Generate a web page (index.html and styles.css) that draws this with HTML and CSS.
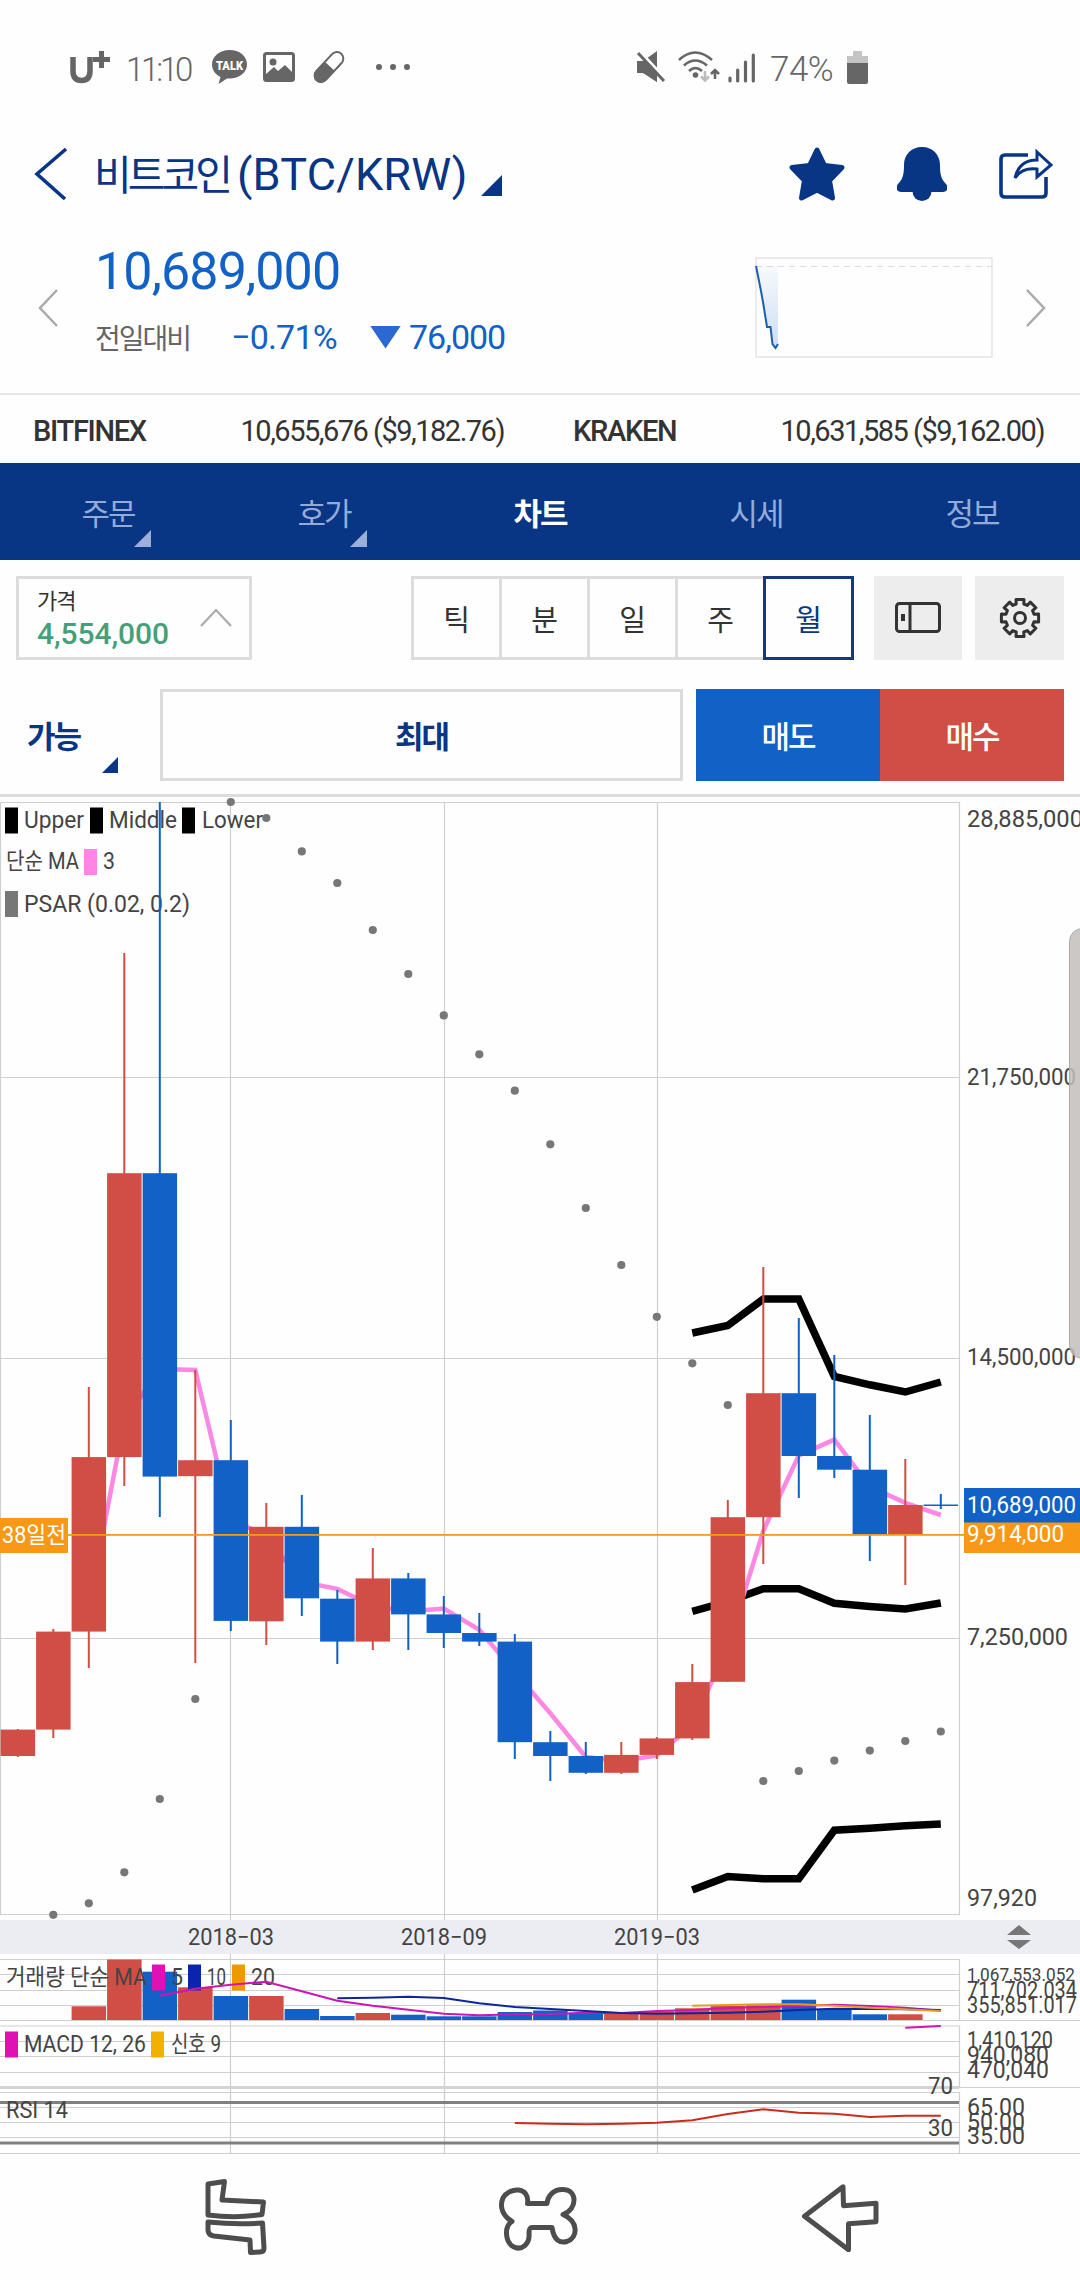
FILE: index.html
```html
<!DOCTYPE html>
<html lang="ko">
<head>
    <meta charset="UTF-8">
    <meta name="viewport" content="width=device-width, initial-scale=1.0">
    <title>비트코인(BTC/KRW)</title>
    <link rel="stylesheet" href="styles.css">
</head>
<body>

    <div class="status">
        <svg class="carrier" width="42" height="36" viewBox="0 0 42 36" fill="none" stroke="#666">
            <path d="M3 8v14q0 9.500 8.500 9.500t8.500-9.500v-14" stroke-width="5.500"/>
            <path d="M23 10.500h17M31.500 2v17" stroke-width="5"/>
        </svg>
        <span class="clock">11:10</span>
        <svg class="talk" width="35" height="34" viewBox="0 0 35 34">
            <path d="M17.500 0C7.500 0 0 6.500 0 14.500c0 5.500 3.500 10 8.500 12.500L6.500 34l8.500-5.500c11 1 20-5.500 20-14S27.500 0 17.500 0z" fill="#666"/>
            <text x="4" y="19.500" textLength="27" lengthAdjust="spacingAndGlyphs" class="talk-text">TALK</text>
        </svg>
        <svg class="photo" width="32" height="30" viewBox="0 0 32 30">
            <rect x="1.500" y="1.500" width="29" height="27" rx="2" fill="none" stroke="#666" stroke-width="3"/>
            <circle cx="10" cy="10" r="3.500" fill="#666"/>
            <path d="M3 22l8-7 4 4 7-6 8 8v7H3z" fill="#666"/>
        </svg>
        <svg class="pill" width="32" height="32" viewBox="0 0 32 32">
            <g transform="rotate(-47 16 16)">
                <rect x="-2" y="9.500" width="36" height="13" rx="6.500" fill="#fff" stroke="#666" stroke-width="2"/>
                <path d="M17 9h-13a7 7 0 0 0 0 14h13z" fill="#666"/>
            </g>
        </svg>
        <svg class="more" width="36" height="8" viewBox="0 0 36 8" fill="#666">
            <circle cx="4" cy="4" r="3"/><circle cx="18" cy="4" r="3"/><circle cx="32" cy="4" r="3"/>
        </svg>
        <svg class="mute" width="30" height="34" viewBox="0 0 30 34">
            <path d="M1 11h6L21 1v31L7 23H1z" fill="#666"/>
            <path d="M0 1l28 30" stroke="#fff" stroke-width="8"/>
            <path d="M2 3l26 28" stroke="#666" stroke-width="3"/>
            <path d="M1 11h7l13 13v8L8 23H1z" fill="#666"/>
        </svg>
        <svg class="wifi" width="42" height="34" viewBox="0 0 42 34" fill="none" stroke="#666" stroke-width="2.600">
            <path d="M1 10q16-15 33 0M6 15.500q11-10 23 0M11 21q6.500-6 13 0"/>
            <circle cx="17.500" cy="25" r="2.800" fill="#666" stroke="none"/>
            <path d="M27 21v9M23 26.500l4 4 4-4" stroke="#bbb"/>
            <path d="M37 29v-9M33 24l4-4 4 4"/>
        </svg>
        <svg class="signal" width="28" height="30" viewBox="0 0 28 30" stroke="#666" stroke-width="3.200" stroke-linecap="round">
            <path d="M2 25v3M9.700 17v11M17.500 9v19M25.300 2v26"/>
        </svg>
        <span class="percent">74%</span>
        <svg class="battery" width="21" height="33" viewBox="0 0 21 33">
            <path d="M6 0h9v5h6v8H0V5h6z" fill="#c4c4c4"/>
            <path d="M0 12h21v19q0 2-2 2H2q-2 0-2-2z" fill="#666"/>
        </svg>
    </div>

    <div class="header">
        <svg class="back" width="34" height="54" viewBox="0 0 34 54" fill="none" stroke="#083584" stroke-width="3.600">
            <path d="M32 2L3 27l28 25"/>
        </svg>
        <h1><span class="coin">비트코인</span>(BTC/KRW)</h1>
        <i class="corner corner-title"></i>
        <div class="actions">
            <svg width="56" height="54" viewBox="0 0 56 54">
                <path d="M28 3l7.500 15.500L53 20.500 40.500 33.500 43.500 51 28 43 12.500 51l3-17.500L3 20.500l17.500-2z" fill="#083584" stroke="#083584" stroke-width="5" stroke-linejoin="round"/>
            </svg>
            <svg width="50" height="54" viewBox="0 0 50 54" fill="#083584">
                <path d="M25 0C14 0 7 8 7 18c0 9-1 14-6 19-3 4-1 8 3 8h42c4 0 6-4 3-8-5-5-6-10-6-19C43 8 36 0 25 0z"/>
                <circle cx="25" cy="44.500" r="9.500"/>
            </svg>
            <svg width="54" height="52" viewBox="0 0 54 52" fill="none" stroke="#083584" stroke-width="3.600">
                <path d="M29 7H6q-4 0-4 4v34q0 4 4 4h37q4 0 4-4V29"/>
                <path d="M38 4l14 13-14 12v-8q-15-2-22 9 4-18 22-18z" stroke-width="3"/>
            </svg>
        </div>
    </div>

    <div class="quote">
        <svg class="prev" width="20" height="40" viewBox="0 0 20 40" fill="none" stroke="#aaa" stroke-width="2.500">
            <path d="M19 2L2 20l17 18"/>
        </svg>
        <div class="price">
            <div class="now">10,689,000</div>
            <div class="change">
                <span class="label">전일대비</span>
                <span class="rate">−0.71%</span>
                <i class="down"></i>
                <span class="diff">76,000</span>
            </div>
        </div>
        <svg class="mini" width="238" height="102" viewBox="0 0 238 102" fill="none">
            <defs>
                <linearGradient id="fade" x1="0" y1="0" x2="0" y2="1">
                    <stop offset="0" stop-color="#1161c6" stop-opacity=".03"/>
                    <stop offset="1" stop-color="#1161c6" stop-opacity=".2"/>
                </linearGradient>
            </defs>
            <rect x="1" y="1" width="236" height="99" stroke="#d8d8d8"/>
            <path d="M1 9.500h236" stroke="#ddd" stroke-dasharray="6 5"/>
            <path d="M1 9l6 28 5 33h3l3 20 5-1V9z" fill="url(#fade)"/>
            <path d="M1 9l5 25 2 11 4 25h3.500l2 17 3 4 2.500-4" stroke="#1c5fae" stroke-width="2"/>
        </svg>
        <svg class="next" width="20" height="40" viewBox="0 0 20 40" fill="none" stroke="#aaa" stroke-width="2.500">
            <path d="M1 2l17 18L1 38"/>
        </svg>
    </div>

    <div class="exchanges">
        <div class="exchange"><b>BITFINEX</b><span>10,655,676 ($9,182.76)</span></div>
        <div class="exchange"><b>KRAKEN</b><span>10,631,585 ($9,162.00)</span></div>
    </div>

    <div class="tabs">
        <div class="tab">주문<i class="corner"></i></div>
        <div class="tab">호가<i class="corner"></i></div>
        <div class="tab active">차트</div>
        <div class="tab">시세</div>
        <div class="tab">정보</div>
    </div>

    <div class="toolbar">
        <div class="price-box">
            <div>
                <div class="caption">가격</div>
                <div class="value">4,554,000</div>
            </div>
            <svg width="34" height="20" viewBox="0 0 34 20" fill="none" stroke="#aaa" stroke-width="2.200">
                <path d="M2 18L17 2l15 16"/>
            </svg>
        </div>
        <div class="periods">
            <span>틱</span><span>분</span><span>일</span><span>주</span><span class="on">월</span>
        </div>
        <div class="icon-btn layout">
            <svg width="46" height="32" viewBox="0 0 46 32" fill="none" stroke="#333" stroke-width="3">
                <rect x="1.500" y="1.500" width="43" height="28" rx="3"/>
                <path d="M15 2v28"/>
                <rect x="6" y="12" width="4" height="7" fill="#333" stroke="none"/>
            </svg>
        </div>
        <div class="icon-btn">
            <svg width="42" height="42" viewBox="0 0 42 42" fill="none" stroke="#333" stroke-width="3">
                <path id="gear" d="" stroke-linejoin="round"/>
                <circle cx="21" cy="21" r="5.500"/>
            </svg>
        </div>
    </div>

    <div class="order">
        <div class="avail">가능<i class="corner"></i></div>
        <div class="max">최대</div>
        <div class="sell">매도</div>
        <div class="buy">매수</div>
    </div>

    <svg class="chart" id="chart" width="1080" height="1360" viewBox="0 797 1080 1360"></svg>

    <div class="navbar">
        <svg width="62" height="78" viewBox="205 2178 62 78">
            <path d="M208 2184l16.500-2.500-2.500 18.500 41.500 2-1.500 12.500q-26 4-54 .5z"/>
            <path d="M208 2222q28 3 54.500 1l1.500 25q0 4-4 4l-9.500.5-.5-12.500-36-4q-6-1-6-6z"/>
        </svg>
        <svg width="84" height="68" viewBox="498 2184 84 68">
            <path d="M528.500 2204.500C531 2187 510 2188 504 2199c-4 9 0 18 9 23.500-8 5-7 20 1 25 9 5 17-3 16-13 0-5 1-6 3-6h20c2 13 8 16 15 14 11-4 12-20-4-27 15-6 14-24 1-25-10-1-16 6-17 14z"/>
        </svg>
        <svg width="80" height="70" viewBox="800 2183 80 70">
            <path d="M804.500 2217.300l38.500-29.500.5 19 32.500-2.500v18.500l-27.500 2v26z"/>
        </svg>
    </div>

    <script src="chart.js"></script>
</body>
</html>
```

FILE: styles.css
```css
* {
    box-sizing: border-box;
}

body {
    margin: 0;
    width: 1080px;
    height: 2280px;
    overflow: hidden;
    background-color: #fefefe;
    font-family: Roboto, "Noto Sans CJK KR", sans-serif;
    color: #333;
}

svg {
    display: block;
    flex: none;
}

/* status bar */
.status {
    display: flex;
    align-items: center;
    height: 134px;
    padding-left: 70px;
    color: #666;
    font-size: 33px;
    font-weight: 300;
}

.clock {
    width: 66px;
    margin-left: 14px;
    margin-top: 4px;
    letter-spacing: -3.2px;
}

.talk {
    margin-left: 20px;
}

.talk-text {
    font-size: 12px;
    font-weight: 900;
    fill: #fff;
}

.photo {
    margin-left: 16px;
}

.pill {
    margin-left: 18px;
    overflow: visible;
}

.more {
    margin-left: 30px;
}

.mute {
    margin-left: 225px;
}

.wifi {
    margin-left: 12px;
}

.signal {
    margin-left: 8px;
    margin-top: 2px;
}

.percent {
    width: 70px;
    margin-left: 14px;
    margin-top: 4px;
    font-size: 35px;
    letter-spacing: -0.5px;
}

.battery {
    margin-left: 7px;
}

/* title */
.header {
    display: flex;
    align-items: center;
    height: 110px;
    padding: 0 27px 30px 34px;
}

.header h1 {
    width: 373px;
    margin: 2px 0 0 26px;
    font-size: 45px;
    font-weight: 400;
    letter-spacing: 0.2px;
    line-height: 60px;
    color: #083584;
    white-space: nowrap;
}

.coin {
    display: inline-block;
    width: 143px;
    font-size: 41px;
    letter-spacing: -4px;
}

.corner {
    display: block;
    width: 17px;
    height: 17px;
    background-color: #083584;
    clip-path: polygon(100% 0, 100% 100%, 0 100%);
}

.corner-title {
    width: 21px;
    height: 21px;
    margin: 23px 0 0 14px;
}

.actions {
    display: flex;
    align-items: center;
    gap: 52px;
    margin-left: auto;
}

/* quote */
.quote {
    display: flex;
    height: 149px;
    padding: 0 34px 0 38px;
}

.prev, .next {
    margin-top: 44px;
}

.price {
    width: 697px;
    padding: 1px 0 0 37px;
    color: #1161c6;
}

.now {
    height: 60px;
    font-size: 52px;
    line-height: 54px;
    letter-spacing: -0.9px;
}

.change {
    display: flex;
    height: 64px;
    align-items: center;
    font-size: 34px;
}

.change .label {
    width: 136px;
    color: #666;
    font-size: 28px;
    letter-spacing: -2px;
}

.change .rate {
    width: 139px;
    letter-spacing: -0.8px;
}

.change .down {
    width: 31px;
    height: 23px;
    margin-right: 8px;
    background-color: #2c68d2;
    clip-path: polygon(0 0, 100% 0, 50% 100%);
}

.change .diff {
    letter-spacing: -1px;
}

.mini {
    margin-top: 13px;
}

.next {
    margin-left: auto;
}

/* other exchanges */
.exchanges {
    display: flex;
    height: 70px;
    border-top: 2px solid #e6e6e6;
}

.exchange {
    display: flex;
    justify-content: space-between;
    align-items: center;
    width: 540px;
    padding: 3px 36px 0 33px;
    font-size: 29px;
    letter-spacing: -1.5px;
}

.exchange b {
    font-weight: 500;
    letter-spacing: -1.3px;
}

/* tabs */
.tabs {
    display: flex;
    height: 97px;
    background-color: #083584;
}

.tab {
    position: relative;
    width: 216px;
    font-size: 31px;
    line-height: 104px;
    letter-spacing: -2px;
    text-align: center;
    color: #94aad8;
}

.tab .corner {
    position: absolute;
    left: 134px;
    top: 67px;
    background-color: #9cafd8;
}

.tab.active {
    color: #fff;
    font-weight: 700;
}

/* price box, periods */
.toolbar {
    display: flex;
    height: 100px;
    padding: 16px 16px 0;
}

.price-box {
    display: flex;
    justify-content: space-between;
    align-items: center;
    width: 236px;
    height: 84px;
    padding: 0 16px 0 18px;
    border: 3px solid #dcdcdc;
    flex: none;
}

.caption {
    height: 32px;
    font-size: 22px;
    line-height: 38px;
    letter-spacing: -1px;
}

.value {
    font-size: 30px;
    font-weight: 500;
    line-height: 38px;
    letter-spacing: -0.1px;
    color: #46a077;
}

.periods {
    display: flex;
    flex: none;
    margin-left: 159px;
}

.periods span {
    width: 91px;
    height: 84px;
    margin-right: -3px;
    border: 3px solid #dcdcdc;
    font-size: 29px;
    line-height: 84px;
    text-align: center;
}

.periods .on {
    position: relative;
    border-color: #133a7c;
    color: #083584;
}

.icon-btn {
    display: flex;
    flex: none;
    justify-content: center;
    align-items: center;
    width: 89px;
    height: 84px;
    margin-left: 13px;
    background-color: #ededed;
}

.icon-btn.layout {
    width: 88px;
    margin-left: 23px;
}

/* order row */
.order {
    display: flex;
    height: 137px;
    padding: 29px 16px 16px 27px;
    border-bottom: 3px solid #dcdcdc;
    font-size: 31px;
    font-weight: 700;
    line-height: 97px;
    letter-spacing: -2px;
    text-align: center;
    color: #083584;
}

.avail {
    position: relative;
    width: 133px;
    height: 92px;
    text-align: left;
}

.avail .corner {
    position: absolute;
    left: 75px;
    top: 68px;
    width: 16px;
    height: 16px;
}

.max {
    width: 523px;
    height: 92px;
    border: 3px solid #dcdcdc;
    line-height: 91px;
}

.sell, .buy {
    width: 184px;
    height: 92px;
    color: #fff;
    font-weight: 500;
}

.sell {
    margin-left: 13px;
    background-color: #1161c6;
}

.buy {
    background-color: #d04e45;
}

/* chart */
.grid line {
    stroke: #cfcfcf;
    stroke-width: 1.2;
}

.chart text {
    font-size: 23px;
    fill: #444;
}

.chart text.light {
    fill: #fff;
}

.chart text.small {
    font-size: 19px;
}

/* system buttons */
.navbar {
    display: flex;
    align-items: center;
    height: 120px;
    padding-left: 205px;
}

.navbar svg {
    fill: none;
    stroke: #4d4d4d;
    stroke-width: 5;
    stroke-linejoin: round;
}

.navbar svg + svg {
    margin-left: 230px;
}

.navbar svg:last-child {
    margin-left: 219px;
}
```

FILE: chart.js
```js
const NS = 'http://www.w3.org/2000/svg';
const RED = '#d04e45';
const BLUE = '#1161c6';
const chart = document.getElementById('chart');

// [color, body top, body bottom, wick top, wick bottom]
const candles = [
    ['r', 1729.6, 1756, 1729, 1757],
    ['r', 1631.6, 1729.6, 1629, 1738],
    ['r', 1457.1, 1631.6, 1387, 1668],
    ['r', 1173.2, 1457.1, 953, 1486],
    ['b', 1173.2, 1476.6, 802, 1517],
    ['r', 1460.2, 1476.2, 1370, 1663],
    ['b', 1460.2, 1620.9, 1420, 1631],
    ['r', 1526.8, 1621.3, 1503, 1645],
    ['b', 1526.8, 1598.3, 1495, 1616],
    ['b', 1598.7, 1641.6, 1590, 1664],
    ['r', 1578.4, 1641.6, 1548, 1650],
    ['b', 1578.4, 1614.4, 1573, 1650],
    ['b', 1614.4, 1633, 1596, 1648],
    ['b', 1633, 1641.6, 1613, 1646],
    ['b', 1641.6, 1742.2, 1634, 1759],
    ['b', 1742.2, 1756, 1731, 1781],
    ['b', 1756, 1772.8, 1742, 1774],
    ['r', 1754.9, 1772.8, 1742, 1774],
    ['r', 1738.4, 1754.9, 1737, 1759],
    ['r', 1682.1, 1738.4, 1664, 1740],
    ['r', 1517.2, 1681.8, 1500, 1682],
    ['r', 1393.2, 1517.2, 1267, 1564],
    ['b', 1393.2, 1456, 1318, 1498],
    ['b', 1456, 1469.7, 1355, 1478],
    ['b', 1469.7, 1534, 1415, 1561],
    ['r', 1505, 1534.4, 1459, 1585],
    ['b', 1504.5, 1506, 1494, 1509]
];

const psar = [null, 1914.8, 1903.3, 1872.3, 1799, 1699, 802, 818, 851.4, 883, 930, 974, 1015.4,
    1054.3, 1090.7, 1144.3, 1208, 1265, 1316.8, 1363.3, 1405, 1781, 1771, 1760.6, 1750.6, 1741, 1731.5];

// volume bar tops, first bar belongs to candle 2
const volume = [2006.3, 1959.5, 1971.7, 1987.3, 1996, 1996, 2009, 2016, 2013, 2014.7, 2016.3, 2016.3,
    2012, 2010.5, 2014, 2014, 2011.3, 2008.3, 2006, 2005.3, 1999.7, 2009, 2014.3, 2014.3];

function add(parent, tag, attrs, text) {
    const el = document.createElementNS(NS, tag);
    for (const key in attrs) el.setAttribute(key, attrs[key]);
    if (text) el.textContent = text;
    parent.appendChild(el);
    return el;
}

function cx(i) {
    return 17.8 + 35.5 * i;
}

function rect(x, y, w, h, fill) {
    add(chart, 'rect', { x: x, y: y, width: w, height: h, fill: fill });
}

function series(start, values, color, width) {
    const points = values.map((y, i) => cx(start + i).toFixed(1) + ',' + y).join(' ');
    add(chart, 'polyline', { points: points, fill: 'none', stroke: color, 'stroke-width': width });
}

function label(x, y, text, width, cls) {
    add(chart, 'text', { x: x, y: y, textLength: width, lengthAdjust: 'spacingAndGlyphs', class: cls || '' }, text);
}

// grid
const grid = add(chart, 'g', { class: 'grid' });
[802.5, 1077.5, 1358.5, 1638.5, 1914.5, 1959.5, 1974.5, 1990.5, 2005.5, 2020.5,
    2026, 2041.5, 2056.5, 2072.5, 2092.5, 2107.5, 2122.5, 2137.5].forEach(y => {
    add(grid, 'line', { x1: 0, x2: 959.5, y1: y, y2: y });
});
[230.5, 444.5, 657.5].forEach(x => add(grid, 'line', { x1: x, x2: x, y1: 802, y2: 2153 }));
add(grid, 'line', { x1: 0.5, x2: 0.5, y1: 802, y2: 1915 });
[[802, 1915], [1959, 2020], [2026, 2087], [2092, 2153]].forEach(r => {
    add(grid, 'line', { x1: 959.5, x2: 959.5, y1: r[0], y2: r[1] });
});
[2020.5, 2087.5, 2153.5].forEach(y => add(grid, 'line', { x1: 0, x2: 1080, y1: y, y2: y }));
rect(0, 2086, 959, 3, '#d3d3d3');
rect(0, 1920, 1080, 34, '#ecedf3');

// legends
rect(5, 807.5, 13, 26, '#000');
label(24, 828, 'Upper', 60);
rect(90, 807.5, 13, 26, '#000');
label(109, 828, 'Middle', 68);
rect(182, 807.5, 13, 26, '#000');
label(202, 828, 'Lower', 61);
label(6, 869, '단순 MA', 73);
rect(84, 849, 13, 26, '#fd86e4');
label(103, 869, '3', 12);
rect(5, 891, 13, 26, '#777');
label(24, 912, 'PSAR (0.02, 0.2)', 166);

// bollinger bands and moving average
series(19, [1333, 1325.4, 1299, 1299, 1376.4, 1384.8, 1392, 1382], '#000', 7.5);
series(19, [1611.3, 1601.5, 1588.8, 1588.8, 1603.3, 1606.4, 1609, 1603], '#000', 7.5);
series(19, [1890, 1876.6, 1878.8, 1878.8, 1830.2, 1828.3, 1825.7, 1824], '#000', 7.5);
const closes = candles.map(c => c[0] === 'r' ? c[1] : c[2]);
const ma = [];
for (let i = 2; i < closes.length; i++) {
    ma.push(+((closes[i] + closes[i - 1] + closes[i - 2]) / 3).toFixed(1));
}
series(2, ma, '#fb88e3', 4.5);

psar.forEach((y, i) => {
    if (y) add(chart, 'circle', { cx: cx(i), cy: y, r: 4.1, fill: '#777' });
});

candles.forEach((c, i) => {
    const color = c[0] === 'r' ? RED : BLUE;
    rect(cx(i) - 1, c[3], 2, c[4] - c[3], color);
    rect(cx(i) - 17.2, c[1], 34.5, c[2] - c[1], color);
});

rect(0, 1534, 964, 1.8, '#f09b22');
rect(0, 1518, 68, 35, '#f89817');
label(2, 1543, '38일전', 64, 'light');

// price axis
label(967, 827, '28,885,000', 116);
label(967, 1085, '21,750,000', 109);
label(967, 1365, '14,500,000', 109);
label(967, 1645, '7,250,000', 101);
label(967, 1906, '97,920', 70);
rect(964, 1522, 116, 31, '#f89817');
rect(964, 1488, 116, 34.5, BLUE);
label(967, 1512.5, '10,689,000', 109, 'light');
label(967, 1542, '9,914,000', 97, 'light');

// dates
label(188, 1945, '2018−03', 86);
label(401, 1945, '2018−09', 86);
label(614, 1945, '2019−03', 86);
add(chart, 'path', { d: 'M1007 1935l12-10 12 10zM1007 1940l12 9 12-9z', fill: '#777' });

// volume
volume.forEach((y, i) => {
    rect(cx(i + 2) - 17.2, y, 34.5, 2020 - y, candles[i + 2][0] === 'r' ? RED : BLUE);
});
label(6, 1985, '거래량 단순 MA', 141);
rect(152, 1964.5, 13, 26, '#df10b4');
label(171, 1985, '5', 12);
rect(188, 1964.5, 13, 26, '#0a25ad');
label(207, 1985, '10', 19);
rect(232, 1964.5, 13, 26, '#ee9900');
label(251, 1985, '20', 24);
series(4, [1995.7, 1988.7, 1984.7, 1981.7, 1991.3, 2000.7, 2005.7, 2009.7, 2013.7, 2015.3, 2014.3, 2014,
    2012.7, 2013, 2011, 2010, 2008, 2007, 2006, 2004.7, 2006, 2007.7, 2010.7], '#cc16b4', 2);
series(9, [1998.3, 1997.7, 1996.7, 1998, 2003.3, 2007, 2009, 2011, 2013, 2013.7, 2013.3, 2012.7,
    2011.7, 2010, 2008.7, 2009, 2009.3, 2010], '#10259c', 2);
series(19, [2005.7, 2005, 2004.3, 2004.3, 2005.7, 2007.7, 2009.3, 2011], '#e59a20', 2);
label(967, 1981, '1,067,553.052', 108, 'small');
label(967, 1997.5, '711,702.034', 110);
label(967, 2012.5, '355,851.017', 110);

// macd
rect(5, 2031.5, 13, 26, '#df10b4');
label(24, 2052, 'MACD 12, 26', 122);
rect(151, 2031.5, 13, 26, '#f2b100');
label(171, 2052, '신호 9', 50);
series(25, [2027.7, 2026], '#cc16b4', 2);
label(967, 2048, '1,410,120', 86);
label(967, 2063, '940,080', 82);
label(967, 2078, '470,040', 82);

// rsi
rect(0, 2101, 959, 3, '#808080');
rect(0, 2141.5, 959, 3, '#808080');
series(14, [2123, 2123.7, 2124.3, 2123.7, 2122.7, 2120.3, 2114, 2109.3, 2112.7, 2113.7, 2117, 2115.7, 2115.7], '#cf2a1e', 2);
label(6, 2118, 'RSI 14', 62);
label(928, 2094, '70', 25);
label(928, 2136, '30', 25);
label(967, 2115, '65.00', 58);
label(967, 2129.5, '50.00', 58);
label(967, 2144, '35.00', 58);

// scroll handle
add(chart, 'rect', { x: 1069.5, y: 928.5, width: 30, height: 430, rx: 13, fill: '#c2bebb', 'fill-opacity': 0.85, stroke: '#aaa' });

// settings gear outline, eight teeth
let gear = '';
for (let i = 0; i < 8; i++) {
    [[-15, 14.5], [-12, 19], [12, 19], [15, 14.5]].forEach(p => {
        const a = (i * 45 + p[0]) * Math.PI / 180;
        gear += (gear ? 'L' : 'M') + (21 + p[1] * Math.cos(a)).toFixed(1) + ' ' + (21 + p[1] * Math.sin(a)).toFixed(1);
    });
}
document.getElementById('gear').setAttribute('d', gear + 'z');
```
